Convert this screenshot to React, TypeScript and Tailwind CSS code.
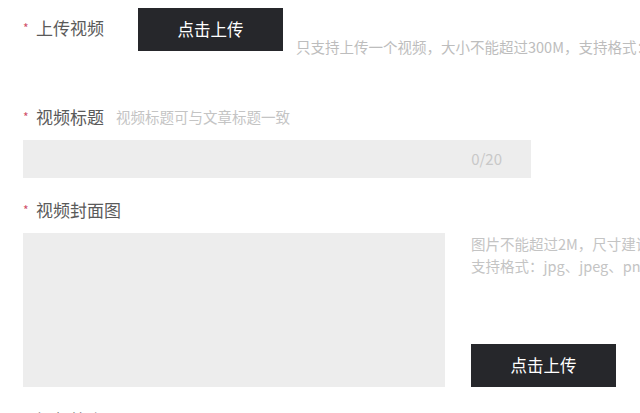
import React from "react";

export default function App() {
  const font = { fontFamily: '"Noto Sans CJK SC", "Noto Sans", sans-serif' };

  return (
    <div className="w-[640px] h-[413px] overflow-hidden bg-white pl-[23px] pt-[8px]" style={font}>

      {/* upload video */}
      <div className="flex h-[43px] items-start">
        <div className="w-[115px] shrink-0 mt-[8px] flex items-center h-[24px]">
          <span className="text-[#d0506a] text-[12px] w-[13px]">*</span>
          <span className="text-[17px] text-[#5a5a5a] leading-[24px] whitespace-nowrap">上传视频</span>
        </div>
        <button className="w-[145px] h-[43px] bg-[#26272b] text-white text-[16.5px] shrink-0">
          点击上传
        </button>
        <div className="ml-[13px] mt-[29px] leading-[20px] text-[14.5px] text-[#bdbdbd] whitespace-nowrap">
          只支持上传一个视频，大小不能超过300M，支持格式：mp4、mov
        </div>
      </div>

      {/* title */}
      <div className="mt-[54px] flex items-center h-[24px]">
        <span className="text-[#d0506a] text-[12px] w-[13px]">*</span>
        <span className="text-[17px] text-[#5a5a5a] leading-[24px]">视频标题</span>
        <span className="ml-[12px] text-[14.5px] text-[#c4c4c4]">视频标题可与文章标题一致</span>
      </div>

      <div className="mt-[11px] w-[508px] h-[38px] bg-[#ededed] flex items-center justify-end pr-[29px]">
        <span className="text-[15px] text-[#c8c8c8]">0/20</span>
      </div>

      {/* cover */}
      <div className="mt-[20px] flex items-center h-[24px]">
        <span className="text-[#d0506a] text-[12px] w-[13px]">*</span>
        <span className="text-[17px] text-[#5a5a5a] leading-[24px]">视频封面图</span>
      </div>

      <div className="mt-[11px] flex h-[154px]">
        <div className="w-[422px] h-[154px] bg-[#ededed] shrink-0"></div>
        <div className="ml-[26px] flex flex-col justify-between">
          <div className="text-[14.5px] leading-[22px] text-[#c4c4c4] whitespace-nowrap">
            <div>图片不能超过2M，尺寸建议750*420</div>
            <div>支持格式：jpg、jpeg、png</div>
          </div>
          <button className="w-[145px] h-[43px] bg-[#26272b] text-white text-[16.5px]">
            点击上传
          </button>
        </div>
      </div>

      {/* next field, cut off */}
      <div className="mt-[21px] flex items-center h-[24px]">
        <span className="text-[#d0506a] text-[12px] w-[13px]">*</span>
        <span className="text-[17px] text-[#5a5a5a] leading-[24px]">视频简介</span>
      </div>

    </div>
  );
}
